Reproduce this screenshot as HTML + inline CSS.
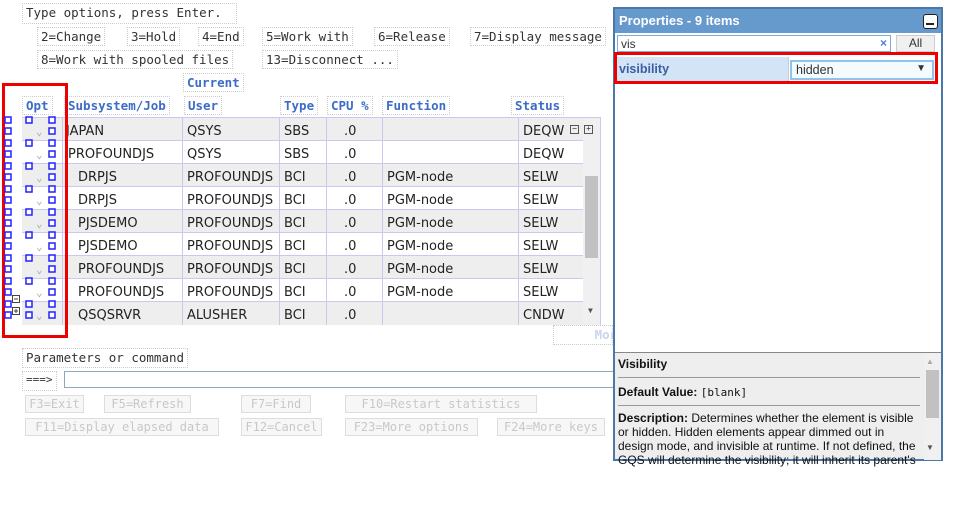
<!DOCTYPE html>
<html><head><meta charset="utf-8"><style>
*{margin:0;padding:0;box-sizing:border-box}
body{width:956px;height:520px;background:#fff;position:relative;overflow:hidden;font-family:"DejaVu Sans Mono","Liberation Mono",monospace;font-size:12.5px;color:#333}
.a{position:absolute;white-space:nowrap}
.dot{border:1px dotted #ccc;padding:1px 3px}
.h{color:#3c6cc8;font-weight:bold;font-size:12.5px}
.row{position:absolute;left:22px;width:561px;height:23px;border-bottom:1px solid #c8c8f0;font-family:"DejaVu Sans","Liberation Sans",sans-serif;font-size:13px;color:#222}
.row span{position:absolute;top:6px}
.btn{position:absolute;height:18px;border:1px solid #ddd;background:#f7f7f7;color:#c8c8c8;font-size:12px;text-align:center;line-height:16px}
.sans{font-family:"Liberation Sans",Arial,sans-serif}
</style></head><body>
<div class="a dot" style="left:22px;top:3px;height:21px;width:215px;color:#333">Type options, press Enter.</div>
<div class="a dot" style="left:37px;top:27px">2=Change</div>
<div class="a dot" style="left:127px;top:27px">3=Hold</div>
<div class="a dot" style="left:198px;top:27px">4=End</div>
<div class="a dot" style="left:262px;top:27px">5=Work with</div>
<div class="a dot" style="left:374px;top:27px">6=Release</div>
<div class="a dot" style="left:470px;top:27px">7=Display message</div>
<div class="a dot" style="left:37px;top:50px">8=Work with spooled files</div>
<div class="a dot" style="left:262px;top:50px">13=Disconnect ...</div>
<div class="a dot h" style="left:183px;top:73px">Current</div>
<div class="a dot h" style="left:22px;top:96px">Opt</div>
<div class="a dot h" style="left:64px;top:96px">Subsystem/Job</div>
<div class="a dot h" style="left:184px;top:96px">User</div>
<div class="a dot h" style="left:280px;top:96px">Type</div>
<div class="a dot h" style="left:327px;top:96px">CPU %</div>
<div class="a dot h" style="left:382px;top:96px">Function</div>
<div class="a dot h" style="left:511px;top:96px">Status</div>

<div class="a" style="left:22px;top:117px;width:579px;height:208px;border:1px solid #c8c8f0;background:#eee"></div>
<div class="row" style="top:118px;background:#eee"><span style="left:44px">JAPAN</span><span style="left:165px">QSYS</span><span style="left:262px">SBS</span><span style="left:322px">.0</span><span style="left:501px">DEQW</span></div>
<div class="row" style="top:141px;background:#fff"><span style="left:46px">PROFOUNDJS</span><span style="left:165px">QSYS</span><span style="left:262px">SBS</span><span style="left:322px">.0</span><span style="left:501px">DEQW</span></div>
<div class="row" style="top:164px;background:#eee"><span style="left:56px">DRPJS</span><span style="left:165px">PROFOUNDJS</span><span style="left:262px">BCI</span><span style="left:322px">.0</span><span style="left:365px">PGM-node</span><span style="left:501px">SELW</span></div>
<div class="row" style="top:187px;background:#fff"><span style="left:56px">DRPJS</span><span style="left:165px">PROFOUNDJS</span><span style="left:262px">BCI</span><span style="left:322px">.0</span><span style="left:365px">PGM-node</span><span style="left:501px">SELW</span></div>
<div class="row" style="top:210px;background:#eee"><span style="left:56px">PJSDEMO</span><span style="left:165px">PROFOUNDJS</span><span style="left:262px">BCI</span><span style="left:322px">.0</span><span style="left:365px">PGM-node</span><span style="left:501px">SELW</span></div>
<div class="row" style="top:233px;background:#fff"><span style="left:56px">PJSDEMO</span><span style="left:165px">PROFOUNDJS</span><span style="left:262px">BCI</span><span style="left:322px">.0</span><span style="left:365px">PGM-node</span><span style="left:501px">SELW</span></div>
<div class="row" style="top:256px;background:#eee"><span style="left:56px">PROFOUNDJS</span><span style="left:165px">PROFOUNDJS</span><span style="left:262px">BCI</span><span style="left:322px">.0</span><span style="left:365px">PGM-node</span><span style="left:501px">SELW</span></div>
<div class="row" style="top:279px;background:#fff"><span style="left:56px">PROFOUNDJS</span><span style="left:165px">PROFOUNDJS</span><span style="left:262px">BCI</span><span style="left:322px">.0</span><span style="left:365px">PGM-node</span><span style="left:501px">SELW</span></div>
<div class="row" style="top:302px;background:#eee;border-bottom:none"><span style="left:56px">QSQSRVR</span><span style="left:165px">ALUSHER</span><span style="left:262px">BCI</span><span style="left:322px">.0</span><span style="left:501px">CNDW</span></div>
<div class="a" style="left:62px;top:118px;height:207px;border-left:1px solid #c8c8f0"></div>
<div class="a" style="left:182px;top:118px;height:207px;border-left:1px solid #c8c8f0"></div>
<div class="a" style="left:279px;top:118px;height:207px;border-left:1px solid #c8c8f0"></div>
<div class="a" style="left:326px;top:118px;height:207px;border-left:1px solid #c8c8f0"></div>
<div class="a" style="left:382px;top:118px;height:207px;border-left:1px solid #c8c8f0"></div>
<div class="a" style="left:518px;top:118px;height:207px;border-left:1px solid #c8c8f0"></div>
<div class="a" style="left:583px;top:118px;width:17px;height:207px;background:#f0f0f0"></div>
<div class="a" style="left:585px;top:176px;width:13px;height:82px;background:#c1c1c1"></div>
<div class="a" style="left:588px;top:306px;font-size:8px;color:#555">▼</div>
<div class="a" style="left:570px;top:125px;width:9px;height:9px;border:1px solid #555;font-size:8px;line-height:6px;text-align:center">−</div>
<div class="a" style="left:584px;top:125px;width:9px;height:9px;border:1px solid #555;font-size:8px;line-height:6px;text-align:center">+</div>

<div class="a" style="left:36px;top:120px;color:#aaa;font-size:11px;line-height:23px">⌄<br>⌄<br>⌄<br>⌄<br>⌄<br>⌄<br>⌄<br>⌄<br>⌄</div>

<div class="a" style="left:2px;top:83px;width:66px;height:255px;border:3px solid #e00"></div>

<div class="a dot" style="left:553px;top:325px;width:60px;height:20px;color:#c8d4f0;font-weight:bold">&nbsp;&nbsp;&nbsp;&nbsp;&nbsp;Mor</div>
<div class="a dot" style="left:22px;top:348px;height:20px">Parameters or command</div>
<div class="a dot" style="left:22px;top:371px;height:20px;font-size:11px">===&gt;</div>
<div class="a" style="left:64px;top:371px;width:552px;height:17px;border:1px solid #8ab"></div>
<div class="btn" style="left:25px;top:395px;width:59px">F3=Exit</div>
<div class="btn" style="left:104px;top:395px;width:87px">F5=Refresh</div>
<div class="btn" style="left:241px;top:395px;width:70px">F7=Find</div>
<div class="btn" style="left:345px;top:395px;width:192px">F10=Restart statistics</div>
<div class="btn" style="left:25px;top:418px;width:194px">F11=Display elapsed data</div>
<div class="btn" style="left:241px;top:418px;width:81px">F12=Cancel</div>
<div class="btn" style="left:345px;top:418px;width:133px">F23=More options</div>
<div class="btn" style="left:497px;top:418px;width:108px">F24=More keys</div>

<div class="a sans" style="left:613px;top:7px;width:330px;height:454px;border:2px solid #4a78a8;background:#fff">
  <div style="position:absolute;left:0;top:0;width:326px;height:24px;background:#6699cc;color:#fff;font-weight:bold;font-size:13px;padding:4px 4px">Properties - 9 items</div>
  <div style="position:absolute;right:3px;top:5px;width:15px;height:15px;border:1.5px solid #222;border-radius:3px;background:#fff"><div style="position:absolute;left:2px;top:8px;width:8px;height:2px;background:#222"></div></div>
  <div style="position:absolute;left:2px;top:26px;width:274px;height:17px;border:1px solid #7aaee0;font-size:12px;padding:1px 3px">vis<span style="position:absolute;right:3px;top:0;color:#4a7fd0;font-weight:bold">×</span></div>
  <div style="position:absolute;left:281px;top:26px;width:39px;height:17px;border:1px solid #ccc;background:#f0f0f0;font-size:12px;text-align:center;line-height:15px">All</div>
  <div style="position:absolute;left:2px;top:48px;width:320px;height:27px;background:#d4e4f7"></div>
  <div style="position:absolute;left:4px;top:53px;color:#3a5ea0;font-size:12.5px;font-weight:bold">visibility</div>
  <div style="position:absolute;left:173px;top:48px;width:150px;height:27px;background:#fff;border-left:1px solid #ccc"></div>
  <div style="position:absolute;left:175px;top:51px;width:144px;height:20px;border:2px solid #8cc4ee;background:#f4fbff;font-size:12.5px;padding:1px 4px">hidden<span style="position:absolute;right:6px;top:1px;font-size:10px">▼</span></div>
  <div style="position:absolute;left:0;top:343px;width:326px;height:107px;background:#eee;border-top:1.5px solid #888;font-size:12px;color:#111">
    <div style="position:absolute;left:3px;top:4px;font-weight:bold">Visibility</div>
    <div style="position:absolute;left:3px;top:24px;width:302px;border-top:1px solid #999"></div>
    <div style="position:absolute;left:3px;top:32px"><b>Default Value:</b> <span style="font-family:'DejaVu Sans Mono',monospace;font-size:11px">[blank]</span></div>
    <div style="position:absolute;left:3px;top:52px;width:302px;border-top:1px solid #999"></div>
    <div style="position:absolute;left:3px;top:58px;width:302px;white-space:normal;line-height:14px"><b>Description:</b> Determines whether the element is visible or hidden. Hidden elements appear dimmed out in design mode, and invisible at runtime. If not defined, the GQS will determine the visibility; it will inherit its parent's</div>
    <div style="position:absolute;left:309px;top:0;width:17px;height:107px;background:#f0f0f0"></div>
    <div style="position:absolute;left:311px;top:17px;width:13px;height:48px;background:#c1c1c1"></div>
    <div style="position:absolute;left:311px;top:90px;font-size:8px;color:#555">▼</div>
    <div style="position:absolute;left:311px;top:4px;font-size:8px;color:#aaa">▲</div>
  </div>
</div>
<div class="a" style="left:614px;top:52px;width:324px;height:32px;border:3px solid #e00"></div>

<div class="a" style="left:4px;top:116px;width:56px;height:210px">
<svg width="56" height="210" xmlns="http://www.w3.org/2000/svg">
<g fill="#fff" stroke="#22f" stroke-width="1.5">
<rect x="1" y="1" width="6" height="6"/><rect x="22" y="1" width="6" height="6"/><rect x="45" y="1" width="6" height="6"/>
<rect x="1" y="12" width="6" height="6"/><rect x="45" y="12" width="6" height="6"/>
<rect x="1" y="24" width="6" height="6"/><rect x="22" y="24" width="6" height="6"/><rect x="45" y="24" width="6" height="6"/>
<rect x="1" y="35" width="6" height="6"/><rect x="45" y="35" width="6" height="6"/>
<rect x="1" y="47" width="6" height="6"/><rect x="22" y="47" width="6" height="6"/><rect x="45" y="47" width="6" height="6"/>
<rect x="1" y="58" width="6" height="6"/><rect x="45" y="58" width="6" height="6"/>
<rect x="1" y="70" width="6" height="6"/><rect x="22" y="70" width="6" height="6"/><rect x="45" y="70" width="6" height="6"/>
<rect x="1" y="81" width="6" height="6"/><rect x="45" y="81" width="6" height="6"/>
<rect x="1" y="93" width="6" height="6"/><rect x="22" y="93" width="6" height="6"/><rect x="45" y="93" width="6" height="6"/>
<rect x="1" y="104" width="6" height="6"/><rect x="45" y="104" width="6" height="6"/>
<rect x="1" y="116" width="6" height="6"/><rect x="22" y="116" width="6" height="6"/><rect x="45" y="116" width="6" height="6"/>
<rect x="1" y="127" width="6" height="6"/><rect x="45" y="127" width="6" height="6"/>
<rect x="1" y="139" width="6" height="6"/><rect x="22" y="139" width="6" height="6"/><rect x="45" y="139" width="6" height="6"/>
<rect x="1" y="150" width="6" height="6"/><rect x="45" y="150" width="6" height="6"/>
<rect x="1" y="162" width="6" height="6"/><rect x="22" y="162" width="6" height="6"/><rect x="45" y="162" width="6" height="6"/>
<rect x="1" y="173" width="6" height="6"/><rect x="45" y="173" width="6" height="6"/>
<rect x="1" y="185" width="6" height="6"/><rect x="22" y="185" width="6" height="6"/><rect x="45" y="185" width="6" height="6"/>
<rect x="1" y="196" width="6" height="6"/><rect x="22" y="196" width="6" height="6"/><rect x="45" y="196" width="6" height="6"/>
</g>
<g fill="#fff" stroke="#444" stroke-width="1"><rect x="8.5" y="179.5" width="7" height="7"/><rect x="8.5" y="191.5" width="7" height="7"/></g>
<g stroke="#444"><path d="M10 183h4M10 195h4M12 193v4"/></g>
</svg>
</div>
</body></html>
